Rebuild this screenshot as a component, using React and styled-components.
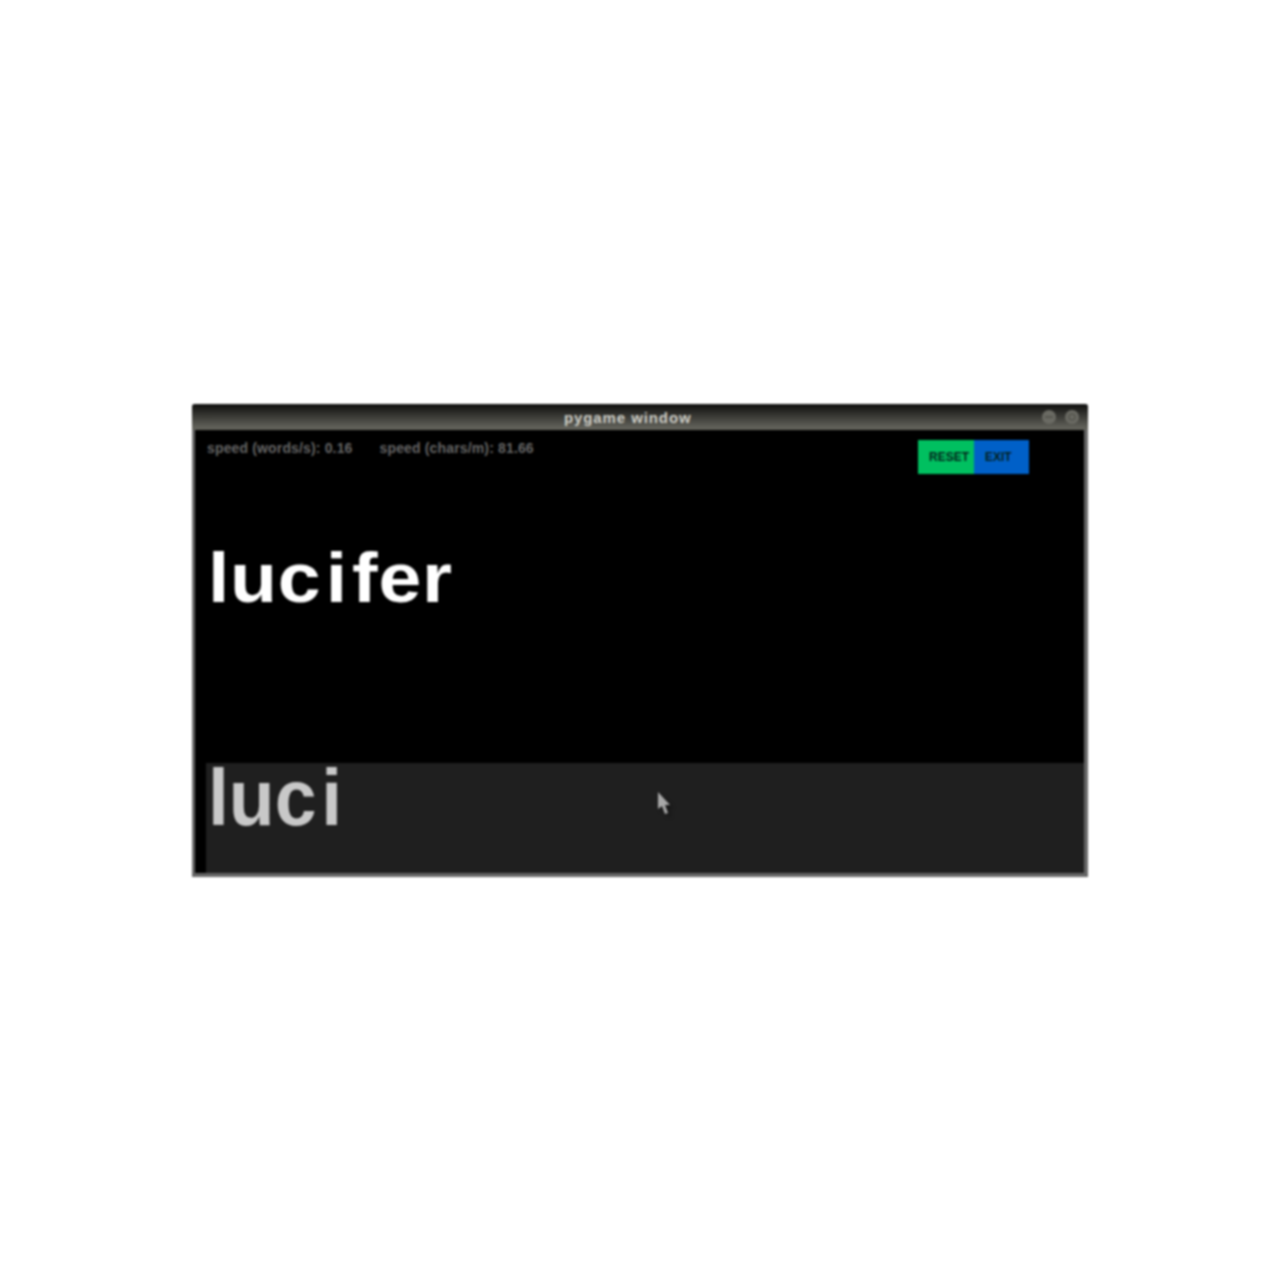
import React from "react";
import styled, { createGlobalStyle } from "styled-components";

const GlobalStyle = createGlobalStyle`
  html, body {
    margin: 0;
    padding: 0;
    background: #ffffff;
    font-family: "Liberation Sans", Arial, sans-serif;
  }
`;

const Page = styled.div`
  height: 1280px;
  box-sizing: border-box;
  padding: 404px 192px 0;
`;

const Window = styled.div`
  width: 896px;
  height: 473px;
  display: flex;
  flex-direction: column;
  box-sizing: border-box;
  background: #000;
  border-left: 3px solid #666;
  border-right: 4px solid #666;
  border-bottom: 4px solid #666;
  border-radius: 3px 3px 0 0;
  filter: blur(0.9px);
`;

const TitleBar = styled.div`
  height: 26px;
  margin: 0 -4px 0 -3px;
  flex: none;
  position: relative;
  display: flex;
  align-items: center;
  justify-content: space-between;
  padding: 0 9px 0 11px;
  background: linear-gradient(#0e0e0d, #5f5f58 88%, #64645c);
  border-radius: 3px 3px 0 0;
`;

const Title = styled.div`
  position: absolute;
  left: 372px;
  top: 5px;
  color: #cfcfc8;
  font-size: 15px;
  font-weight: 700;
  letter-spacing: 0.9px;
  line-height: 18px;
`;

const MenuDots = styled.div`
  color: #3a3a35;
  font-size: 10px;
  letter-spacing: 1px;
  line-height: 10px;
`;

const WindowButtons = styled.div`
  display: flex;
  gap: 9px;
`;

const RoundButton = styled.div`
  width: 14px;
  height: 14px;
  border-radius: 50%;
  background: #6a6a63;
  display: flex;
  align-items: center;
  justify-content: center;
`;

const Body = styled.div`
  flex: 1;
  display: flex;
  flex-direction: column;
  min-height: 0;
`;

const TopRow = styled.div`
  height: 44px;
  flex: none;
  display: flex;
  align-items: flex-start;
  padding: 10px 55px 0 12px;
`;

const Stat = styled.div`
  color: #666;
  font-size: 14px;
  font-weight: 700;
  line-height: 16px;
  letter-spacing: 0.15px;
  white-space: nowrap;
  margin-right: ${(p) => p.$gap}px;
`;

const Buttons = styled.div`
  margin-left: auto;
  display: flex;
`;

const ActionButton = styled.div`
  width: ${(p) => p.$width}px;
  height: 34px;
  box-sizing: border-box;
  padding-left: ${(p) => p.$inset}px;
  background: ${(p) => p.$bg};
  color: #04201a;
  font-size: 12px;
  font-weight: 700;
  line-height: 34px;
`;

const TargetArea = styled.div`
  flex: 1;
  padding: 0 0 0 13px;
`;

const Target = styled.div`
  margin-top: 62px;
  color: #fff;
  font-size: 70px;
  font-weight: 700;
  line-height: 65px;
  letter-spacing: 0.6px;
  transform: scaleX(1.1);
  transform-origin: left center;
`;

const InputPanel = styled.div`
  height: 110px;
  flex: none;
  margin-left: 11px;
  position: relative;
  background: #1f1f1f;
  padding-left: 2px;
`;

const Typed = styled.div`
  color: #c8c8c8;
  font-size: 79px;
  font-weight: 700;
  line-height: 70px;
  transform: scaleX(0.95);
  transform-origin: left center;
`;

const LetterI = styled.span`
  margin: 0 ${(p) => p.$space}px;
`;

const Cursor = styled.svg`
  position: absolute;
  left: 451px;
  top: 28px;
  filter: drop-shadow(3px 3px 2px rgba(0, 0, 0, 0.35));
`;

export default function App() {
  return (
    <Page>
      <GlobalStyle />
      <Window>
        <TitleBar>
          <MenuDots>••</MenuDots>
          <Title>pygame window</Title>
          <WindowButtons>
            <RoundButton>
              <svg width="8" height="2" viewBox="0 0 8 2"><rect width="8" height="2" fill="#55554e" /></svg>
            </RoundButton>
            <RoundButton>
              <svg width="8" height="8" viewBox="0 0 8 8"><circle cx="4" cy="4" r="3" fill="none" stroke="#55554e" strokeWidth="1.5" /></svg>
            </RoundButton>
          </WindowButtons>
        </TitleBar>
        <Body>
          <TopRow>
            <Stat $gap={27}>speed (words/s): 0.16</Stat>
            <Stat $gap={0}>speed (chars/m): 81.66</Stat>
            <Buttons>
              <ActionButton $width={56} $inset={11} $bg="#00c060">RESET</ActionButton>
              <ActionButton $width={55} $inset={11} $bg="#0060c8">EXIT</ActionButton>
            </Buttons>
          </TopRow>
          <TargetArea>
            <Target>luc<LetterI $space={4}>i</LetterI>fer</Target>
          </TargetArea>
          <InputPanel>
            <Typed>luc<LetterI $space={5}>i</LetterI></Typed>
            <Cursor width="18" height="28" viewBox="0 0 18 28">
              <path d="M1 1 L1 18 L5 15 L8 23 L11 22 L8 14 L13 14 Z" fill="#a8a8a8" />
            </Cursor>
          </InputPanel>
        </Body>
      </Window>
    </Page>
  );
}
